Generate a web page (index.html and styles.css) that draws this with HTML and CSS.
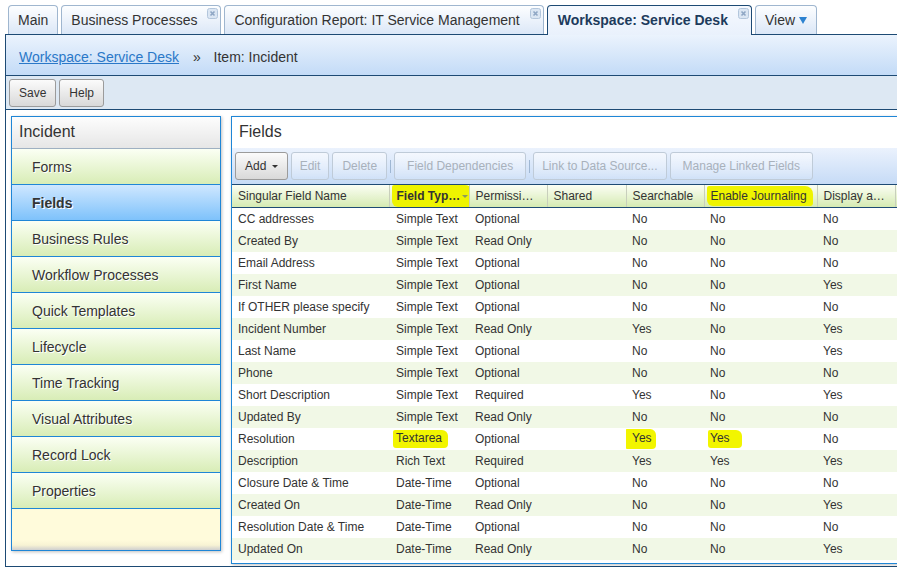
FILE: index.html
```html
<!DOCTYPE html>
<html lang="en">
<head>
    <meta charset="UTF-8">
    <title>Workspace: Service Desk - Fields</title>
    <link rel="stylesheet" href="styles.css">
</head>
<body>
<div class="app">
    <div class="tabbar">
        <div class="tab">Main</div>
        <div class="tab closable">Business Processes<span class="tab-close"><svg width="11" height="11" viewBox="0 0 11 11"><rect x="0.5" y="0.5" width="10" height="10" rx="2" fill="#dbe6f3" stroke="#b3c6dc"/><path d="M3.5 3.5 L7.5 7.5 M7.5 3.5 L3.5 7.5" stroke="#8ea6c4" stroke-width="1.6"/></svg></span></div>
        <div class="tab closable">Configuration Report: IT Service Management<span class="tab-close"><svg width="11" height="11" viewBox="0 0 11 11"><rect x="0.5" y="0.5" width="10" height="10" rx="2" fill="#dbe6f3" stroke="#b3c6dc"/><path d="M3.5 3.5 L7.5 7.5 M7.5 3.5 L3.5 7.5" stroke="#8ea6c4" stroke-width="1.6"/></svg></span></div>
        <div class="tab closable active">Workspace: Service Desk<span class="tab-close"><svg width="11" height="11" viewBox="0 0 11 11"><rect x="0.5" y="0.5" width="10" height="10" rx="2" fill="#dbe6f3" stroke="#b3c6dc"/><path d="M3.5 3.5 L7.5 7.5 M7.5 3.5 L3.5 7.5" stroke="#8ea6c4" stroke-width="1.6"/></svg></span></div>
        <div class="tab">View <span class="caret-blue"></span></div>
    </div>

    <div class="frame">
        <div class="crumbs">
            <a href="#">Workspace: Service Desk</a>
            <span class="crumb-sep">&raquo;</span>
            <span>Item: Incident</span>
        </div>

        <div class="toolbar">
            <button class="btn">Save</button>
            <button class="btn">Help</button>
        </div>

        <div class="main">
            <div class="nav">
                <div class="nav-head">Incident</div>
                <div class="nav-item">Forms</div>
                <div class="nav-item selected">Fields</div>
                <div class="nav-item">Business Rules</div>
                <div class="nav-item">Workflow Processes</div>
                <div class="nav-item">Quick Templates</div>
                <div class="nav-item">Lifecycle</div>
                <div class="nav-item">Time Tracking</div>
                <div class="nav-item">Visual Attributes</div>
                <div class="nav-item">Record Lock</div>
                <div class="nav-item">Properties</div>
                <div class="nav-fill"></div>
            </div>

            <div class="panel">
                <div class="panel-title">Fields</div>
                <div class="panel-tools">
                    <button class="btn">Add <span class="caret"></span></button>
                    <button class="btn btn-narrow" disabled>Edit</button>
                    <button class="btn" disabled>Delete</button>
                    <span class="tool-sep"></span>
                    <button class="btn btn-wide" disabled>Field Dependencies</button>
                    <span class="tool-sep"></span>
                    <button class="btn btn-narrow" disabled>Link to Data Source...</button>
                    <button class="btn btn-wide" disabled>Manage Linked Fields</button>
                </div>

                <table class="grid">
                    <colgroup>
                        <col style="width: 157px">
                        <col style="width: 80px">
                        <col style="width: 78px">
                        <col style="width: 79px">
                        <col style="width: 78px">
                        <col style="width: 113px">
                        <col style="width: 78px">
                        <col>
                    </colgroup>
                    <thead>
                        <tr>
                            <th>Singular Field Name</th>
                            <th class="sorted"><span class="hl-head">Field Typ…<span class="sort-caret"></span></span></th>
                            <th>Permissi…</th>
                            <th>Shared</th>
                            <th>Searchable</th>
                            <th><span class="hl-head">Enable Journaling</span></th>
                            <th>Display a…</th>
                            <th></th>
                        </tr>
                    </thead>
                    <tbody id="rows"></tbody>
                </table>
            </div>
        </div>
    </div>
</div>

<script>
    // name, type, permission, searchable, journaling, display
    const fields = [
        ['CC addresses', 'Simple Text', 'Optional', 'No', 'No', 'No'],
        ['Created By', 'Simple Text', 'Read Only', 'No', 'No', 'No'],
        ['Email Address', 'Simple Text', 'Optional', 'No', 'No', 'No'],
        ['First Name', 'Simple Text', 'Optional', 'No', 'No', 'Yes'],
        ['If OTHER please specify', 'Simple Text', 'Optional', 'No', 'No', 'No'],
        ['Incident Number', 'Simple Text', 'Read Only', 'Yes', 'No', 'Yes'],
        ['Last Name', 'Simple Text', 'Optional', 'No', 'No', 'Yes'],
        ['Phone', 'Simple Text', 'Optional', 'No', 'No', 'No'],
        ['Short Description', 'Simple Text', 'Required', 'Yes', 'No', 'Yes'],
        ['Updated By', 'Simple Text', 'Read Only', 'No', 'No', 'No'],
        ['Resolution', 'Textarea', 'Optional', 'Yes', 'Yes', 'No', true],
        ['Description', 'Rich Text', 'Required', 'Yes', 'Yes', 'Yes'],
        ['Closure Date & Time', 'Date-Time', 'Optional', 'No', 'No', 'No'],
        ['Created On', 'Date-Time', 'Read Only', 'No', 'No', 'Yes'],
        ['Resolution Date & Time', 'Date-Time', 'Optional', 'No', 'No', 'No'],
        ['Updated On', 'Date-Time', 'Read Only', 'No', 'No', 'Yes']
    ];

    const tbody = document.getElementById('rows');
    fields.forEach(f => {
        const mark = (text, cls) => f[6] ? `<span class="${cls}">${text}</span>` : text;
        const tr = document.createElement('tr');
        tr.innerHTML = `<td>${f[0].replace('&', '&amp;')}</td>` +
            `<td>${mark(f[1], 'hl hl-type')}</td>` +
            `<td>${f[2]}</td><td></td>` +
            `<td>${mark(f[3], 'hl hl-search')}</td>` +
            `<td>${mark(f[4], 'hl hl-journal')}</td>` +
            `<td>${f[5]}</td><td></td>`;
        tbody.appendChild(tr);
    });
</script>
</body>
</html>
```

FILE: styles.css
```css
body {
    margin: 0;
    font-family: "Liberation Sans", Arial, sans-serif;
    color: #333;
    background: #fff;
    overflow: hidden;
}
.app {
    width: 960px;
    margin-left: 5px;
}

/* tabs */
.tabbar {
    display: flex;
    align-items: flex-end;
    gap: 3px;
    height: 35px;
    padding-left: 3px;
    box-sizing: border-box;
    border-bottom: 1px solid #1d4a74;
}
.tab {
    position: relative;
    height: 29px;
    line-height: 29px;
    padding: 0 9px;
    box-sizing: border-box;
    font-size: 14px;
    color: #333;
    border: 1px solid #9fb6cf;
    border-bottom: none;
    border-radius: 4px 4px 0 0;
    background: linear-gradient(#fdfeff, #dbe7f7);
    white-space: nowrap;
}
.tab.closable {
    padding-right: 23px;
}
.tab.active {
    height: 30px;
    margin-bottom: -1px;
    padding-left: 10px;
    font-weight: bold;
    color: #1d3b5c;
    border-color: #1d4a74;
    background: linear-gradient(#f6f9fe, #e9f1fc);
}
.tab-close {
    position: absolute;
    top: 2px;
    right: 2px;
    line-height: 0;
}
.caret-blue {
    display: inline-block;
    width: 0;
    height: 0;
    border-left: 4px solid transparent;
    border-right: 4px solid transparent;
    border-top: 7px solid #2c82d0;
    vertical-align: 1px;
}

/* frame */
.frame {
    border-left: 1px solid #1d4a74;
    border-bottom: 1px solid #1d4a74;
}
.crumbs {
    height: 40px;
    line-height: 44px;
    padding-left: 13px;
    font-size: 14px;
    background: linear-gradient(#ebf3fd, #c3dbf7);
    border-bottom: 1px solid #1d4a74;
}
.crumbs a {
    color: #2a78c8;
}
.crumb-sep {
    margin: 0 9px 0 10px;
}
.toolbar {
    display: flex;
    gap: 3px;
    height: 34px;
    padding: 3px 0 0 3px;
    box-sizing: border-box;
    background: #dde8f3;
    border-bottom: 1px solid #1d4a74;
}
.btn {
    height: 28px;
    padding: 0 9px;
    font-family: inherit;
    font-size: 12px;
    color: #333;
    border: 1px solid #9b9b9b;
    border-radius: 3px;
    background: linear-gradient(#fbfbfb, #d9d9d9);
}
.btn:disabled {
    color: #a8b1bb;
    border-color: #bfcbd8;
    background: linear-gradient(rgba(255, 255, 255, 0.55), rgba(255, 255, 255, 0.1));
}
.caret {
    display: inline-block;
    width: 0;
    height: 0;
    border-left: 3px solid transparent;
    border-right: 3px solid transparent;
    border-top: 3px solid #333;
    vertical-align: 2px;
    margin-left: 2px;
}

/* main area */
.main {
    display: flex;
    gap: 10px;
    height: 456px;
    padding: 6px 0 0 5px;
    box-sizing: border-box;
}
.nav {
    display: flex;
    flex-direction: column;
    width: 210px;
    height: 435px;
    box-sizing: border-box;
    border: 1px solid #1f86d6;
    box-shadow: 1px 1px 3px rgba(0, 0, 0, 0.25);
}
.nav-head {
    height: 31px;
    line-height: 30px;
    padding-left: 7px;
    font-size: 16px;
    background: linear-gradient(#fdfdfd, #e6e6e6);
    border-bottom: 1px solid #9eb0c2;
}
.nav-item {
    height: 35px;
    line-height: 36px;
    padding-left: 20px;
    font-size: 14px;
    color: #333;
    text-shadow: 1px 1px 0 #fff;
    background: linear-gradient(#fbfff4, #d8edb6);
    border-bottom: 1px solid #1f86d6;
}
.nav-item.selected {
    font-weight: bold;
    background: linear-gradient(#cfe7ff, #7ec2fb);
}
.nav-fill {
    flex: 1;
    background: linear-gradient(#fffbdb 75%, #f8f3d4 88%, #cfcfcf);
}

.panel {
    flex: 1;
    height: 448px;
    box-sizing: border-box;
    border: 1px solid #1f86d6;
    box-shadow: 1px 1px 3px rgba(0, 0, 0, 0.25);
}
.panel-title {
    height: 31px;
    line-height: 29px;
    padding-left: 7px;
    font-size: 16px;
}
.panel-tools {
    display: flex;
    align-items: center;
    gap: 3px;
    height: 36px;
    padding-left: 3px;
    background: linear-gradient(#ebf2fd, #c6dbf6);
    border-bottom: 1px solid #1d4a74;
}
.panel-tools .btn-narrow {
    padding: 0 8px;
}
.panel-tools .btn-wide {
    padding: 0 12px;
}
.tool-sep {
    width: 1px;
    height: 13px;
    background: #9fb7d3;
}

/* grid */
.grid {
    width: 100%;
    table-layout: fixed;
    border-collapse: collapse;
    font-size: 12px;
}
.grid th {
    height: 22px;
    padding: 0 6px;
    text-align: left;
    font-weight: normal;
    white-space: nowrap;
    overflow: hidden;
    background: linear-gradient(#fbfef4, #d5eab2);
    border-right: 1px solid #c8cfbc;
    border-bottom: 1px solid #1d4a74;
}
.grid th.sorted {
    font-weight: bold;
    padding: 0 0 0 2px;
}
.hl-head {
    display: inline-block;
    background: #eef400;
    padding: 3px 6px 3px 4px;
    margin-left: -4px;
    border-radius: 2px 8px 3px 6px;
}
.grid th.sorted .hl-head {
    margin-left: 0;
    padding: 4px 5px 4px 5px;
}
.sort-caret {
    display: inline-block;
    width: 0;
    height: 0;
    border-left: 3px solid transparent;
    border-right: 3px solid transparent;
    border-top: 3px solid #8a9a60;
    vertical-align: 2px;
    margin-left: 2px;
}
.grid td {
    height: 22px;
    padding: 0 6px;
    white-space: nowrap;
    overflow: hidden;
}
.grid td:nth-child(2) {
    padding-left: 7px;
}
.grid tbody tr:nth-child(even) td {
    background: #f1f8e6;
}
.hl {
    display: inline-block;
    background: #f2f500;
    border-radius: 2px 6px 4px 3px;
}
.hl-type {
    padding: 1px 6px 3px 3px;
    margin-left: -3px;
}
.hl-search {
    padding: 2px 4px 4px 7px;
    margin-left: -7px;
}
.hl-journal {
    padding: 1px 12px 3px 2px;
    margin-left: -2px;
}
```
